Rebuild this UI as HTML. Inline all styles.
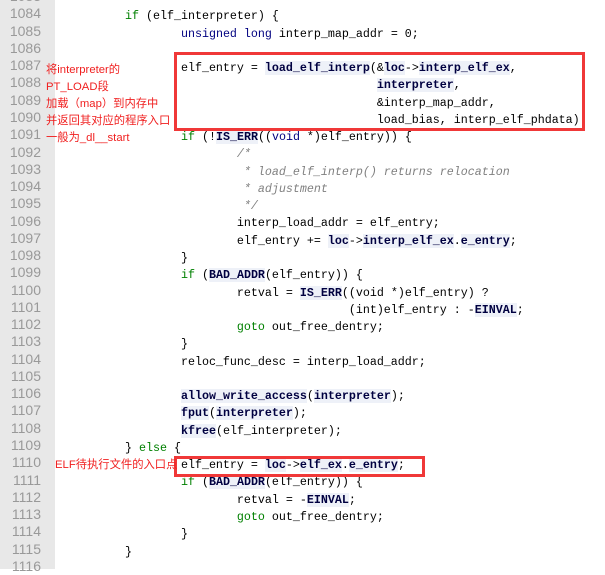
<html><head><style>
body{margin:0;width:605px;height:569px;overflow:hidden;background:#fff;position:relative;font-family:"Liberation Mono",monospace}
#g{position:absolute;left:0;top:0;width:55px;height:569px;background:#e8e8e8}
#n{position:absolute;left:0;top:-11.9px;width:41px;text-align:right;font:14px/17.26px "Liberation Sans",sans-serif;color:#999;margin:0}
pre{position:absolute;left:125px;top:-9px;margin:0;font-size:11.67px;line-height:17.26px;color:#000}
.k{color:#008000}.t{color:#000080}.b{font-weight:bold;color:#000040;background:#eef1f8}.c{color:#808080;font-style:italic}.p{color:#777}
.box{position:absolute;border:3px solid #f03838;box-sizing:border-box}
.a{position:absolute;left:46px;color:#f02020;font:11.3px/17.2px "Liberation Sans","Noto Sans CJK SC",sans-serif;white-space:nowrap}
</style></head><body>
<div id="g"></div>
<pre id="n">1083
1084
1085
1086
1087
1088
1089
1090
1091
1092
1093
1094
1095
1096
1097
1098
1099
1100
1101
1102
1103
1104
1105
1106
1107
1108
1109
1110
1111
1112
1113
1114
1115
1116</pre>
<pre>

<span class="k">if</span> (elf_interpreter) {
        <span class="t">unsigned long</span> interp_map_addr = 0;

        elf_entry = <span class="b">load_elf_interp</span>(&amp;<span class="b">loc</span>-&gt;<span class="b">interp_elf_ex</span>,
                                    <span class="b">interpreter</span>,
                                    &amp;interp_map_addr,
                                    load_bias, interp_elf_phdata)
        <span class="k">if</span> (!<span class="b">IS_ERR</span>((<span class="t">void</span> *)elf_entry)) {
                <span class="c">/*</span>
<span class="c">                 * load_elf_interp() returns relocation</span>
<span class="c">                 * adjustment</span>
<span class="c">                 */</span>
                interp_load_addr = elf_entry;
                elf_entry += <span class="b">loc</span>-&gt;<span class="b">interp_elf_ex</span>.<span class="b">e_entry</span>;
        }
        <span class="k">if</span> (<span class="b">BAD_ADDR</span>(elf_entry)) {
                retval = <span class="b">IS_ERR</span>((void *)elf_entry) ?
                                (int)elf_entry : -<span class="b">EINVAL</span>;
                <span class="k">goto</span> out_free_dentry;
        }
        reloc_func_desc = interp_load_addr;

        <span class="b">allow_write_access</span>(<span class="b">interpreter</span>);
        <span class="b">fput</span>(<span class="b">interpreter</span>);
        <span class="b">kfree</span>(elf_interpreter);
} <span class="k">else</span> {
        elf_entry = <span class="b">loc</span>-&gt;<span class="b">elf_ex</span>.<span class="b">e_entry</span>;
        <span class="k">if</span> (<span class="b">BAD_ADDR</span>(elf_entry)) {
                retval = -<span class="b">EINVAL</span>;
                <span class="k">goto</span> out_free_dentry;
        }
}
</pre>
<div class="box" style="left:174px;top:52px;width:411px;height:79px"></div>
<div class="box" style="left:174px;top:456px;width:251px;height:21px"></div>
<div class="a" style="top:62px">将interpreter的</div>
<div class="a" style="top:79px">PT_LOAD段</div>
<div class="a" style="top:96px">加载（map）到内存中</div>
<div class="a" style="top:113px">并返回其对应的程序入口</div>
<div class="a" style="top:130px">一般为_dl__start</div>
<div class="a" style="left:55px;top:457px">ELF待执行文件的入口点</div>
</body></html>
